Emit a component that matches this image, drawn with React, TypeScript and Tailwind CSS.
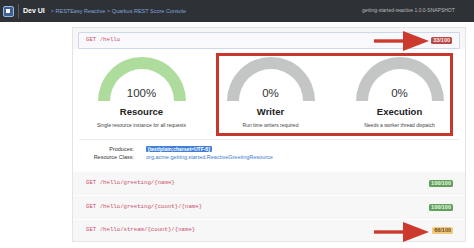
import React from 'react';

type Gauge = {
  value: string;
  title: string;
  note: string;
  color: string;
};

const gauges: Gauge[] = [
  { value: '100%', title: 'Resource', note: 'Single resource instance for all requests', color: '#aedc9c' },
  { value: '0%', title: 'Writer', note: 'Run time writers required', color: '#c3c6c4' },
  { value: '0%', title: 'Execution', note: 'Needs a worker thread dispatch', color: '#c3c6c4' },
];

const rows = [
  { path: 'GET /hello/greeting/{name}', score: '100/100', tone: 'good' },
  { path: 'GET /hello/greeting/{count}/{name}', score: '100/100', tone: 'good' },
  { path: 'GET /hello/stream/{count}/{name}', score: '66/100', tone: 'warn' },
];

function Badge({ score, tone }: { score: string; tone: string }) {
  const cls =
    tone === 'bad'
      ? 'bg-[#b94a48] text-[#fbe9e9]'
      : tone === 'warn'
        ? 'bg-[#f3c97c] text-[#6b4a14]'
        : 'bg-[#62a05a] text-[#eef7ec]';
  return (
    <span className={`${cls} rounded-[1.5px] px-[2px] text-[5.5px] font-bold leading-[7px]`}>
      {score}
    </span>
  );
}

function Arrow({ top }: { top: number }) {
  return (
    <svg
      className="absolute left-[374px]"
      style={{ top }}
      width="56"
      height="20"
      viewBox="0 0 56 20"
    >
      <rect x="0" y="8.3" width="31" height="3.4" fill="#cc3a2e" />
      <polygon points="29,0 55,10 29,20" fill="#cc3a2e" />
    </svg>
  );
}

function GaugeCard({ g }: { g: Gauge }) {
  return (
    <div className="flex flex-col items-center">
      <div className="relative h-[44px] w-[88px]">
        <svg width="88" height="44" viewBox="0 0 88 44">
          <path d="M0 44 A44 44 0 0 1 88 44 L76 44 A32 32 0 0 0 12 44 Z" fill={g.color} />
        </svg>
        <div className="absolute left-0 right-0 top-[30px] text-center text-[11.5px] leading-[13px] text-[#333]">
          {g.value}
        </div>
      </div>
      <div className="mt-[3px] text-[9.5px] font-bold leading-[15px] text-[#222]">{g.title}</div>
      <div className="mt-[2px] text-[5px] leading-[8px] text-[#444]">{g.note}</div>
    </div>
  );
}

export default function App() {
  return (
    <div className="relative h-[248px] w-[474px] overflow-hidden bg-white" style={{ fontFamily: '"Liberation Sans", Arial, sans-serif' }}>
      <div className="flex h-[22px] items-center overflow-hidden bg-[#2e3135]">
        <div className="ml-[3px] flex h-[11px] w-[11px] items-start rounded-[2px] border border-[#9bb8e0] bg-[#3d5f92] p-[2px]">
          <div className="h-[4px] w-[4px] bg-white" />
        </div>
        <div className="ml-[4px] h-[14px] w-px bg-[#5b5e63]" />
        <span className="ml-[4px] text-[7px] font-bold text-white">Dev UI</span>
        <span className="ml-[6px] flex-1 whitespace-nowrap text-[5.5px] text-[#7fa3d6]">
          &gt; RESTEasy Reactive &gt; Quarkus REST Score Console
        </span>
        <span className="w-[112px] shrink-0 whitespace-nowrap text-[5px] text-[#b8bbbf]">
          getting-started-reactive 1.0.0-SNAPSHOT
        </span>
      </div>

      <div className="ml-[72px] mt-[5px] w-[394px] border border-[#e4e4e4] bg-[#f7f7f7]">
        <div className="px-[5px] pt-[4px]">
          <div className="flex h-[17px] items-center justify-between rounded-[1px] border border-[#cfd8ea] bg-[#f9f9fb] pl-[7px] pr-[7px]">
            <span className="text-[5.7px] text-[#c94d6d]" style={{ fontFamily: '"Liberation Mono", monospace' }}>
              GET /hello
            </span>
            <Badge score="33/100" tone="bad" />
          </div>
        </div>

        <div className="bg-white pt-[8px]">
          <div className="ml-[4px] grid w-[387px] grid-cols-3">
            {gauges.map((g) => (
              <GaugeCard key={g.title} g={g} />
            ))}
          </div>
          <div className="mx-[6px] mt-[10px] border-t border-[#ececec] pb-[10px] pt-[6px] text-[5.5px] leading-[7.6px]">
            <div className="flex">
              <span className="w-[55px] text-right text-[#333]">Produces:</span>
              <span className="ml-[12px]">
                <span className="rounded-[1px] bg-[#3f7fd8] px-[2px] text-[5px] font-bold text-white">
                  [text/plain;charset=UTF-8]
                </span>
              </span>
            </div>
            <div className="flex">
              <span className="w-[55px] text-right text-[#333]">Resource Class:</span>
              <span className="ml-[12px] text-[#3b7dd0]">org.acme.getting.started.ReactiveGreetingResource</span>
            </div>
          </div>
        </div>

        {rows.map((r, i) => (
          <div
            key={r.path}
            className={`flex items-center justify-between border-t border-[#fdfdfd] pl-[13px] pr-[12px] ${i === 2 ? 'h-[22px]' : 'h-[24px]'}`}
          >
            <span className="text-[5.7px] text-[#c94d6d]" style={{ fontFamily: '"Liberation Mono", monospace' }}>
              {r.path}
            </span>
            <Badge score={r.score} tone={r.tone} />
          </div>
        ))}
      </div>

      <div className="absolute left-[216px] top-[53px] h-[83px] w-[237px] border-[3px] border-[#c8372d]" />
      <Arrow top={31} />
      <Arrow top={222} />
    </div>
  );
}
